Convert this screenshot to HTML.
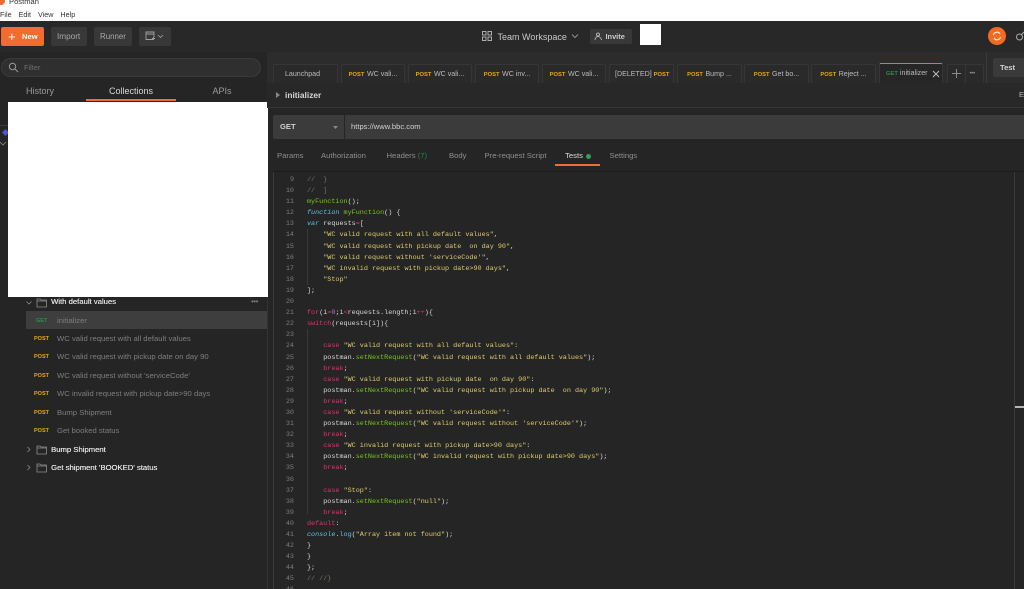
<!DOCTYPE html>
<html><head><meta charset="utf-8"><style>
html,body{margin:0;padding:0;background:#252525;}
#p{position:relative;width:1024px;height:589px;overflow:hidden;background:#252525;font-family:"Liberation Sans",sans-serif;filter:blur(.3px);}
#p div,#p svg,#p pre{position:absolute;}
.t{white-space:nowrap;line-height:12px;}
.btn{background:#383838;border-radius:2px;height:19px;top:27px;}
.tab{top:64px;height:19px;background:#2a2a2a;border:1px solid #363636;border-bottom:none;box-sizing:border-box;border-radius:2px 2px 0 0;font-size:7.1px;color:#bbb;line-height:18px;white-space:nowrap;text-align:center;}
.tab b{color:#e8a80c;font-size:5.8px;margin-right:2.5px;}
.r{left:57px;font-size:7.7px;color:#7e7e7e;white-space:nowrap;line-height:12px;}
.m{left:34px;font-size:5.5px;font-weight:bold;color:#e8a80c;line-height:12px;}
.f{font-size:7.7px;color:#e2e2e2;left:51px;white-space:nowrap;line-height:12px;text-shadow:.2px 0 0 #e2e2e2;}
.rt{top:150px;font-size:7.7px;color:#8f8f8f;white-space:nowrap;line-height:12px;}
#code,#nums{top:175px;margin:0;font-family:"Liberation Mono",monospace;font-size:6.78px;line-height:11.1px;white-space:pre;}
#code{left:307px;color:#d8d8d8;}
#nums{left:274px;width:20px;text-align:right;color:#7d7d7d;}
.c{color:#77776c}.g{color:#78c41f}.k{color:#ee2a6e}.s{color:#dccd6c}.b{color:#5cc3dc;font-style:italic}
</style></head><body><div id="p">
<!-- title bar -->
<div style="left:0;top:0;width:1024px;height:21px;background:#fff;"></div>
<div style="left:-3px;top:-3px;width:8px;height:8px;border-radius:50%;background:#f26b2f;"></div>
<div class="t" style="left:9px;top:-4px;font-size:7.6px;color:#333;">Postman</div>
<div class="t" style="left:0;top:9px;font-size:7.2px;color:#333;word-spacing:5px;">File Edit View Help</div>
<!-- header -->
<div style="left:0;top:21px;width:1024px;height:31px;background:#282828;"></div>
<div style="left:1px;top:27px;width:43px;height:19px;background:#f26b2f;border-radius:2px;"></div>
<div class="t" style="left:8px;top:30px;font-size:13px;color:#fff;line-height:13px;">+</div>
<div class="t" style="left:22px;top:31px;font-size:7.6px;font-weight:bold;color:#fff;">New</div>
<div class="btn" style="left:51px;width:36px;"></div>
<div class="t" style="left:57px;top:31px;font-size:8.2px;color:#a8a8a8;">Import</div>
<div class="btn" style="left:94px;width:38px;"></div>
<div class="t" style="left:100px;top:31px;font-size:7.9px;color:#a8a8a8;">Runner</div>
<div class="btn" style="left:139px;width:32px;"></div>
<svg style="left:145px;top:31px;" width="22" height="11" fill="none" stroke="#a0a0a0" stroke-width=".9"><path d="M8 8.500H1V1h8v5M1 3h8M7 7.500h3M8.500 6v3"/><path d="M13 4l2.500 2.500L18 4" stroke-width=".8"/></svg>
<svg style="left:481px;top:30px;" width="12" height="12" fill="none" stroke="#bbb" stroke-width=".9"><rect x="1.500" y="1.500" width="3.500" height="3.500"/><rect x="7" y="1.500" width="3.500" height="3.500"/><rect x="1.500" y="7" width="3.500" height="3.500"/><rect x="7" y="7" width="3.500" height="3.500"/></svg>
<div class="t" style="left:497.500px;top:31px;font-size:9px;color:#c8c8c8;">Team Workspace</div>
<svg style="left:571px;top:33px;" width="8" height="6" fill="none" stroke="#aaa" stroke-width=".8"><path d="M1 1.500l3 3 3-3"/></svg>
<div style="left:590px;top:29px;width:42px;height:15px;background:#383838;border-radius:2px;"></div>
<svg style="left:594px;top:32px;" width="9" height="9" fill="none" stroke="#ccc" stroke-width=".8"><circle cx="4" cy="2.500" r="1.500"/><path d="M1 8c0-2 1.500-3.500 3-3.500S7 6 7.500 8"/></svg>
<div class="t" style="left:605.500px;top:31px;font-size:7.4px;font-weight:bold;color:#ccc;">Invite</div>
<div style="left:640px;top:24px;width:21px;height:21px;background:#fff;"></div>
<div style="left:988px;top:27px;width:18px;height:18px;border-radius:50%;background:#f26b21;"></div>
<svg style="left:992px;top:31px;" width="10" height="10" fill="none" stroke="#fff" stroke-width="1"><path d="M1.500 4A3.500 3.500 0 0 1 8 3M8.500 6A3.500 3.500 0 0 1 2 7"/></svg>
<svg style="left:1015px;top:30px;" width="9" height="12" fill="none" stroke="#aaa" stroke-width="1"><circle cx="4.500" cy="7" r="3"/><path d="M6 5l3-3"/></svg>
<!-- sidebar -->
<div style="left:1px;top:58px;width:260px;height:19px;background:#2f2f2f;border:1px solid #3a3a3a;border-radius:10px;box-sizing:border-box;"></div>
<svg style="left:8px;top:62px;" width="11" height="11" fill="none" stroke="#999" stroke-width="1"><circle cx="4.500" cy="4.500" r="3.200"/><path d="M7 7l3 3"/></svg>
<div class="t" style="left:24px;top:62px;font-size:7.4px;color:#6e6e6e;">Filter</div>
<div class="t" style="left:26px;top:85px;font-size:9px;color:#9a9a9a;">History</div>
<div class="t" style="left:109px;top:85px;font-size:9px;color:#d8d8d8;">Collections</div>
<div class="t" style="left:212.500px;top:85px;font-size:9px;color:#9a9a9a;">APIs</div>
<div style="left:86px;top:99px;width:90px;height:2px;background:#f26b2f;"></div>
<div style="left:0;top:125px;width:8px;height:1px;background:#3c3c3c;"></div>
<div style="left:3px;top:130px;width:5px;height:5px;background:#4a55d8;transform:rotate(45deg);"></div>
<svg style="left:0;top:141px;" width="8" height="6" fill="none" stroke="#888" stroke-width=".8"><path d="M0 1l3 3 3-3"/></svg>
<div style="left:8px;top:102px;width:260px;height:195px;background:#fff;"></div>
<div style="left:267px;top:297px;width:1px;height:292px;background:#333;"></div>
<svg style="left:25px;top:298px;" width="35" height="10" fill="none" stroke="#8c8c8c" stroke-width=".8"><path d="M1.500 3.500l2.500 2.500 2.500-2.500"/><path d="M12 1h3l1 1h5.500v7H12zM12 3h9.500"/></svg>
<div class="f" style="top:296px;">With default values</div>
<div class="t" style="left:251px;top:296px;font-size:8px;color:#777;letter-spacing:-.5px;">•••</div>
<div style="left:26px;top:311px;width:241px;height:18px;background:#3e3e3e;"></div>
<div class="m" style="left:36px;top:314.500px;color:#2e9146;">GET</div><div class="r" style="top:314.500px;">initializer</div>
<div class="m" style="top:333px;">POST</div><div class="r" style="top:333px;">WC valid request with all default values</div>
<div class="m" style="top:351px;">POST</div><div class="r" style="top:351px;">WC valid request with pickup date on day 90</div>
<div class="m" style="top:370px;">POST</div><div class="r" style="top:370px;">WC valid request without 'serviceCode'</div>
<div class="m" style="top:388px;">POST</div><div class="r" style="top:388px;">WC invalid request with pickup date&gt;90 days</div>
<div class="m" style="top:407px;">POST</div><div class="r" style="top:407px;">Bump Shipment</div>
<div class="m" style="top:425px;">POST</div><div class="r" style="top:425px;">Get booked status</div>
<svg style="left:25px;top:445px;" width="35" height="10" fill="none" stroke="#8c8c8c" stroke-width=".8"><path d="M2.500 2l2.500 2.500L2.500 7"/><path d="M12 1h3l1 1h5.500v7H12zM12 3h9.500"/></svg>
<div class="f" style="top:444px;">Bump Shipment</div>
<svg style="left:25px;top:463px;" width="35" height="10" fill="none" stroke="#8c8c8c" stroke-width=".8"><path d="M2.500 2l2.500 2.500L2.500 7"/><path d="M12 1h3l1 1h5.500v7H12zM12 3h9.500"/></svg>
<div class="f" style="top:462px;">Get shipment 'BOOKED' status</div>
<!-- main -->
<div style="left:267px;top:52px;width:757px;height:31px;background:#2c2c2c;"></div>
<div class="tab" style="left:273px;width:65px;padding-right:6px;">Launchpad</div>
<div class="tab" style="left:341px;width:64px;"><b>POST</b>WC vali...</div>
<div class="tab" style="left:408px;width:64px;"><b>POST</b>WC vali...</div>
<div class="tab" style="left:475px;width:64px;"><b>POST</b>WC inv...</div>
<div class="tab" style="left:542px;width:64px;"><b>POST</b>WC vali...</div>
<div class="tab" style="left:609px;width:65px;overflow:hidden;text-align:left;padding-left:5px;">[DELETED] <b>POST</b></div>
<div class="tab" style="left:677px;width:65px;"><b>POST</b>Bump ...</div>
<div class="tab" style="left:744px;width:65px;"><b>POST</b>Get bo...</div>
<div class="tab" style="left:811px;width:65px;"><b>POST</b>Reject ...</div>
<div class="tab" style="left:879px;width:64px;height:20px;top:63px;background:#262626;border-top:1px solid #f26b2f;text-align:left;padding-left:6px;"><b style="color:#2e8b45;margin-right:2px;">GET</b>initializer</div>
<svg style="left:932px;top:70px;" width="8" height="8" stroke="#bbb" stroke-width="1"><path d="M1 1l6 6M7 1L1 7"/></svg>
<div class="tab" style="left:947px;width:19px;"></div>
<div class="tab" style="left:965px;width:19px;"></div>
<svg style="left:952px;top:69px;" width="9" height="9" stroke="#8a8a8a" stroke-width="1"><path d="M4.500 0v9M0 4.500h9"/></svg>
<div class="t" style="left:969.500px;top:68px;font-size:6px;color:#888;letter-spacing:-.3px;">•••</div>
<div style="left:986px;top:52px;width:1px;height:31px;background:#3a3a3a;"></div>
<div style="left:993px;top:58px;width:31px;height:19px;background:#3a3a3a;border-radius:2px;"></div>
<div class="t" style="left:1000px;top:62px;font-size:7.6px;font-weight:bold;color:#d4d4d4;">Test</div>
<div style="left:267px;top:83px;width:757px;height:24px;background:#282828;"></div>
<div style="left:267px;top:107px;width:757px;height:1px;background:#353535;"></div>
<svg style="left:276px;top:92px;" width="5" height="6"><path d="M0 0l4 3-4 3z" fill="#888"/></svg>
<div class="t" style="left:285px;top:89px;font-size:8.4px;font-weight:bold;color:#d6d6d6;">initializer</div>
<div class="t" style="left:1019px;top:89px;font-size:7.6px;color:#bbb;">E</div>
<div style="left:273px;top:115px;width:71px;height:24px;background:#3b3b3b;border-radius:2px 0 0 2px;"></div>
<div style="left:345px;top:115px;width:679px;height:24px;background:#3b3b3b;"></div>
<div class="t" style="left:280px;top:121px;font-size:7.6px;font-weight:bold;color:#cfcfcf;">GET</div>
<svg style="left:333px;top:126px;" width="6" height="4"><path d="M0 0h5L2.500 3z" fill="#888"/></svg>
<div class="t" style="left:351px;top:121px;font-size:7.6px;color:#d0d0d0;">https://www.bbc.com</div>
<div class="rt" style="left:277px;">Params</div>
<div class="rt" style="left:321px;">Authorization</div>
<div class="rt" style="left:386.500px;">Headers <span style="color:#2f7f49;">(7)</span></div>
<div class="rt" style="left:449px;">Body</div>
<div class="rt" style="left:484.500px;">Pre-request Script</div>
<div class="rt" style="left:565px;color:#dcdcdc;">Tests</div>
<div style="left:586px;top:154px;width:5px;height:5px;border-radius:50%;background:#2fa350;"></div>
<div class="rt" style="left:609.500px;">Settings</div>
<div style="left:555px;top:164px;width:45px;height:2px;background:#f26b2f;"></div>
<div style="left:273px;top:171px;width:751px;height:1px;background:#1c1c1c;"></div>
<div style="left:273px;top:172px;width:1px;height:417px;background:#3a3a3a;"></div>
<div style="left:307px;top:229px;width:1px;height:56px;background:#393939;"></div>
<div style="left:307px;top:329px;width:1px;height:185px;background:#393939;"></div>
<div style="left:1014px;top:172px;width:1px;height:417px;background:#3a3a3a;"></div>
<div style="left:1015px;top:406px;width:9px;height:2px;background:#b5b5b5;"></div>
<pre id="nums">9
10
11
12
13
14
15
16
17
18
19
20
21
22
23
24
25
26
27
28
29
30
31
32
33
34
35
36
37
38
39
40
41
42
43
44
45
46</pre>
<pre id="code"><span class="c">//  }</span>
<span class="c">//  ]</span>
<span class="g">myFunction</span>();
<span class="b">function</span> <span class="g">myFunction</span>() {
<span class="b">var</span> requests<span class="k">=</span>[
    <span class="s">"WC valid request with all default values"</span>,
    <span class="s">"WC valid request with pickup date  on day 90"</span>,
    <span class="s">"WC valid request without 'serviceCode'"</span>,
    <span class="s">"WC invalid request with pickup date&gt;90 days"</span>,
    <span class="s">"Stop"</span>
];

<span class="k">for</span>(i<span class="k">=</span><span style="color:#a67fdc">0</span>;i<span class="k">&lt;</span>requests.length;i<span class="k">++</span>){
<span class="k">switch</span>(requests[i]){

    <span class="k">case</span> <span class="s">"WC valid request with all default values"</span>:
    postman.<span class="g">setNextRequest</span>(<span class="s">"WC valid request with all default values"</span>);
    <span class="k">break</span>;
    <span class="k">case</span> <span class="s">"WC valid request with pickup date  on day 90"</span>:
    postman.<span class="g">setNextRequest</span>(<span class="s">"WC valid request with pickup date  on day 90"</span>);
    <span class="k">break</span>;
    <span class="k">case</span> <span class="s">"WC valid request without 'serviceCode'"</span>:
    postman.<span class="g">setNextRequest</span>(<span class="s">"WC valid request without 'serviceCode'"</span>);
    <span class="k">break</span>;
    <span class="k">case</span> <span class="s">"WC invalid request with pickup date&gt;90 days"</span>:
    postman.<span class="g">setNextRequest</span>(<span class="s">"WC invalid request with pickup date&gt;90 days"</span>);
    <span class="k">break</span>;

    <span class="k">case</span> <span class="s">"Stop"</span>:
    postman.<span class="g">setNextRequest</span>(<span class="s">"null"</span>);
    <span class="k">break</span>;
<span class="k">default</span>:
<span style="color:#5cc3dc"><i>console</i></span>.<span style="color:#5cc3dc">log</span>(<span class="s">"Array item not found"</span>);
}
}
};
<span class="c">// //}</span></pre>
</div></body></html>
